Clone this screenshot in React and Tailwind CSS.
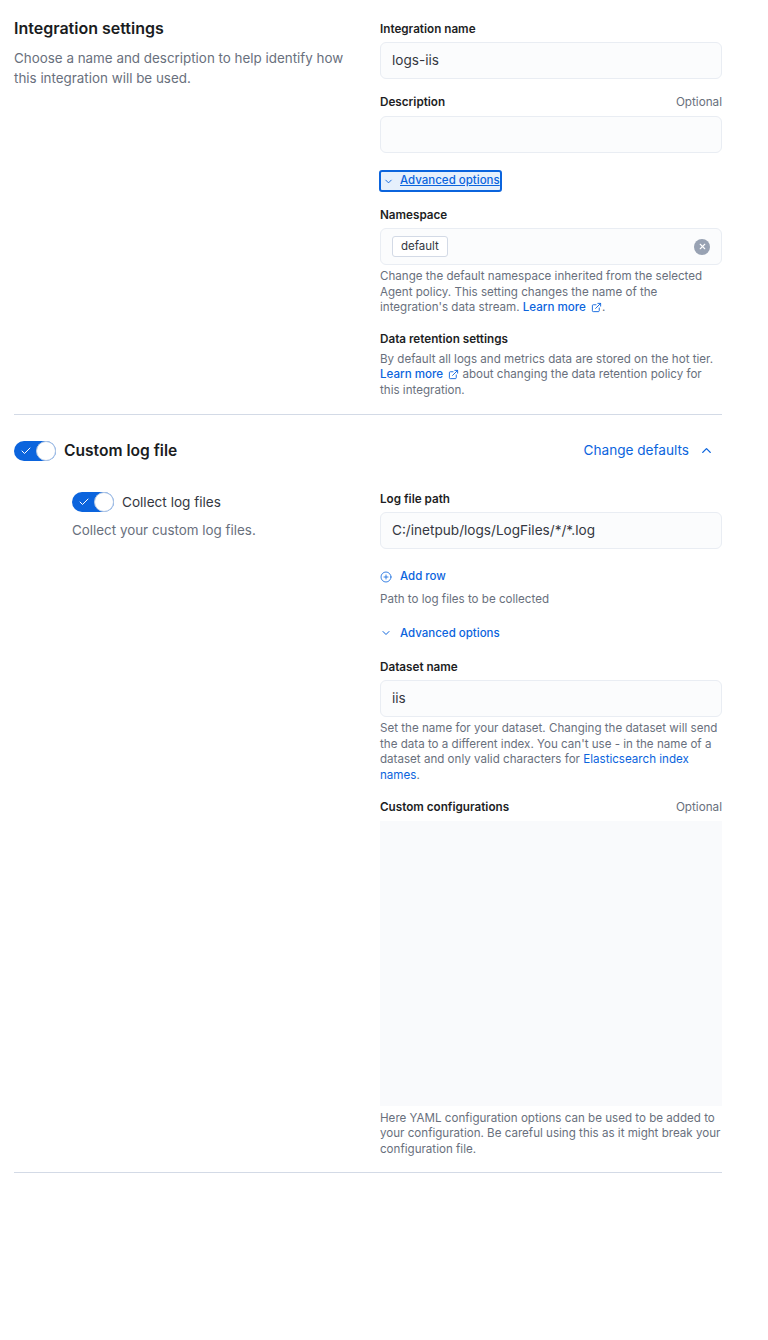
import React from 'react';
import { ChevronDown, ChevronUp, CirclePlus, ExternalLink, Check, X } from 'lucide-react';

const Label = ({ children, optional, className = '' }) => (
  <div className={`flex justify-between items-center text-[11.7px] leading-4 ${className}`}>
    <span className="font-semibold text-[#1d1e24]">{children}</span>
    {optional && <span className="text-[#69707d]">Optional</span>}
  </div>
);

const Input = ({ value, className = '' }) => (
  <div
    className={`h-[37px] rounded-[6px] border border-[#e9edf3] bg-[#fbfcfd] px-[11px] flex items-center text-[13.6px] text-[#343741] ${className}`}
  >
    {value}
  </div>
);

const Help = ({ children, className = '' }) => (
  <p className={`text-[11.6px] leading-[15.6px] text-[#69707d] ${className}`}>{children}</p>
);

const Learn = () => (
  <span className="text-[#0b64dd] font-medium whitespace-nowrap">
    Learn more
    <ExternalLink size={11} strokeWidth={2} className="inline-block ml-[5px] -mt-[2px]" />
  </span>
);

const Toggle = () => (
  <div className="w-[42px] h-5 rounded-full bg-[#0b64dd] flex items-center justify-between pl-[6px] shrink-0">
    <Check size={12} strokeWidth={2} className="text-white" />
    <div className="w-5 h-5 rounded-full bg-white border border-[#b4c8e4]" />
  </div>
);

const App = () => {
  return (
    <div className="min-h-[1340px] bg-white font-['Inter',sans-serif] text-[#343741]">
      <div className="w-[708px] ml-[14px] pt-[16px]">
        {/* Integration settings */}
        <div className="grid grid-cols-2 gap-6 pb-[15px] border-b border-[#d3dae6]">
          <div>
            <h2 className="text-base leading-6 font-semibold text-[#1a1c21]">Integration settings</h2>
            <p className="mt-[8px] text-[13.4px] leading-5 text-[#69707d]">
              Choose a name and description to help identify how this integration will be used.
            </p>
          </div>
          <div className="pt-[5px]">
            <Label>Integration name</Label>
            <Input value="logs-iis" className="mt-[5px]" />

            <Label optional className="mt-[15px]">Description</Label>
            <Input value="" className="mt-[6px]" />

            <button className="mt-[17px] h-[22px] flex items-center gap-[6px] pl-[2px] pr-0 rounded-[3px] border-2 border-[#0b64dd] bg-[#e6f0fc] text-[11.5px] text-[#0b64dd] -ml-[1px]">
              <ChevronDown size={11} strokeWidth={2} />
              <span className="underline font-medium">Advanced options</span>
            </button>

            <Label className="mt-[15px]">Namespace</Label>
            <div className="mt-[5px] h-[37px] rounded-[6px] border border-[#e9edf3] bg-[#fbfcfd] px-[11px] flex items-center justify-between">
              <span className="h-[21px] px-[8px] flex items-center rounded-[3px] border border-[#d3dae6] bg-white text-[11.5px] text-[#343741]">
                default
              </span>
              <span className="w-4 h-4 rounded-full bg-[#98a2b3] flex items-center justify-center">
                <X size={9} strokeWidth={3} className="text-white" />
              </span>
            </div>
            <Help className="mt-[4px]">
              Change the default namespace inherited from the selected Agent policy. This setting changes the
              name of the integration's data stream. <Learn />.
            </Help>

            <Label className="mt-[15px]">Data retention settings</Label>
            <Help className="mt-[5px] leading-4">
              By default all logs and metrics data are stored on the hot tier. <Learn /> about changing the
              data retention policy for this integration.
            </Help>
          </div>
        </div>

        {/* Custom log file */}
        <div className="pb-[15px] border-b border-[#d3dae6]">
          <div className="mt-[24px] h-6 flex items-center justify-between">
            <div className="flex items-center gap-2">
              <Toggle />
              <span className="text-[15.6px] font-semibold text-[#1a1c21]">Custom log file</span>
            </div>
            <button className="flex items-center gap-[10px] pr-[8px] text-[13.6px] text-[#0b64dd]">
              Change defaults
              <ChevronUp size={15} strokeWidth={2.2} />
            </button>
          </div>

          <div className="mt-[28px] grid grid-cols-2 gap-6">
            <div className="pl-[58px]">
              <div className="mt-[1px] flex items-center gap-2">
                <Toggle />
                <span className="text-[13.6px] leading-5 text-[#343741]">Collect log files</span>
              </div>
              <p className="mt-[8px] text-[13.4px] leading-5 text-[#69707d]">Collect your custom log files.</p>
            </div>

            <div>
              <Label>Log file path</Label>
              <Input value="C:/inetpub/logs/LogFiles/*/*.log" className="mt-[5px]" />

              <div className="mt-[20px] h-4 flex items-center gap-[8px] text-[11.5px] font-medium text-[#0b64dd]">
                <CirclePlus size={12} strokeWidth={1.6} />
                Add row
              </div>
              <Help className="mt-[7px] leading-4">Path to log files to be collected</Help>

              <div className="mt-[18px] h-4 flex items-center gap-[8px] text-[11.5px] font-medium text-[#0b64dd]">
                <ChevronDown size={12} strokeWidth={2} />
                Advanced options
              </div>

              <Label className="mt-[18px]">Dataset name</Label>
              <Input value="iis" className="mt-[5px]" />
              <Help className="mt-[4px]">
                Set the name for your dataset. Changing the dataset will send the data to a different index.
                You can't use - in the name of a dataset and only valid characters for{' '}
                <span className="text-[#0b64dd]">Elasticsearch index names</span>.
              </Help>

              <Label optional className="mt-[15px]">Custom configurations</Label>
              <div className="mt-[6px] h-[285px] bg-[#f9fafc]" />
              <Help className="mt-[5px]">
                Here YAML configuration options can be used to be added to your configuration. Be careful
                using this as it might break your configuration file.
              </Help>
            </div>
          </div>
        </div>
      </div>
    </div>
  );
};

export default App;
